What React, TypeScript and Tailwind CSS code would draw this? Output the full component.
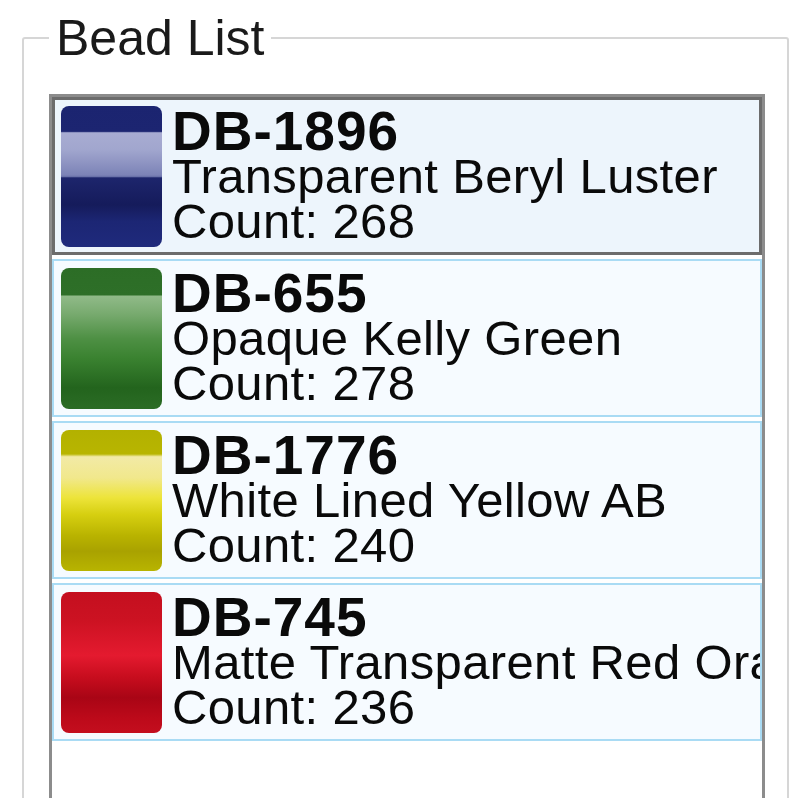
import React from "react";

type Bead = {
  code: string;
  name: string;
  count: number;
  swatch: string;
  selected?: boolean;
};

const beads: Bead[] = [
  {
    code: "DB-1896",
    name: "Transparent Beryl Luster",
    count: 268,
    selected: true,
    swatch:
      "bg-[linear-gradient(180deg,#1b2470_0%,#1c2571_18%,#a8acd2_19%,#a1a6ce_31%,#7c83b7_49%,#6a72aa_50%,#1d256c_51%,#151b5b_70%,#1c2674_82%,#1f2a7c_100%)]",
  },
  {
    code: "DB-655",
    name: "Opaque Kelly Green",
    count: 278,
    swatch:
      "bg-[linear-gradient(180deg,#2c6d26_0%,#2e6f28_19%,#90ba88_20%,#79ab70_32%,#4e9044_50%,#3a8230_64%,#23641d_85%,#2b6c25_100%)]",
  },
  {
    code: "DB-1776",
    name: "White Lined Yellow AB",
    count: 240,
    swatch:
      "bg-[linear-gradient(180deg,#b3b100_0%,#b8b500_17%,#f2eaa6_19%,#f1e88c_34%,#ede43a_48%,#d6cf10_60%,#b9b300_75%,#a9a200_86%,#b8b400_100%)]",
  },
  {
    code: "DB-745",
    name: "Matte Transparent Red Orange",
    count: 236,
    swatch:
      "bg-[linear-gradient(180deg,#c40f1f_0%,#cc1222_20%,#e41a2f_45%,#c80d1e_60%,#a90515_75%,#bd0a1a_90%,#c40e1e_100%)]",
  },
];

function BeadRow({ bead }: { bead: Bead }) {
  return (
    <div
      className={
        bead.selected
          ? "h-[158px] shrink-0 flex items-center overflow-hidden border-[3px] border-[#6c6c6c] bg-[#edf5fc] pl-[6px]"
          : "h-[158px] shrink-0 flex items-center overflow-hidden border-2 border-[#a9dbf4] bg-[#f6fbff] pl-[7px]"
      }
    >
      <div className={"w-[101px] h-[141px] shrink-0 rounded-[8px] " + bead.swatch} />
      <div className="ml-[10px] flex flex-col whitespace-nowrap text-[#0a0a0a]">
        <div className="text-[55px] leading-[45px] font-bold tracking-[1px]">{bead.code}</div>
        <div className="text-[49px] leading-[45px] tracking-[0.35px]">{bead.name}</div>
        <div className="text-[49px] leading-[45px] tracking-[0.35px]">Count: {bead.count}</div>
      </div>
    </div>
  );
}

export default function App() {
  return (
    <div
      className="bg-white min-h-screen pl-[22px] pr-[5px] pt-[13px]"
      style={{ fontFamily: '"Liberation Sans", Arial, sans-serif' }}
    >
      <fieldset className="m-0 min-w-0 border-2 border-[#d6d6d6] rounded-[3px] pl-[25px] pr-[22px] pt-[31px] pb-0">
        <legend className="px-[7px] text-[50px] leading-[50px] text-[#1a1a1a]">Bead List</legend>
        <div className="h-[760px] border-[3px] border-[#8c8c8c] bg-white flex flex-col gap-[4px] overflow-hidden">
          {beads.map((b) => (
            <BeadRow key={b.code} bead={b} />
          ))}
        </div>
      </fieldset>
    </div>
  );
}
